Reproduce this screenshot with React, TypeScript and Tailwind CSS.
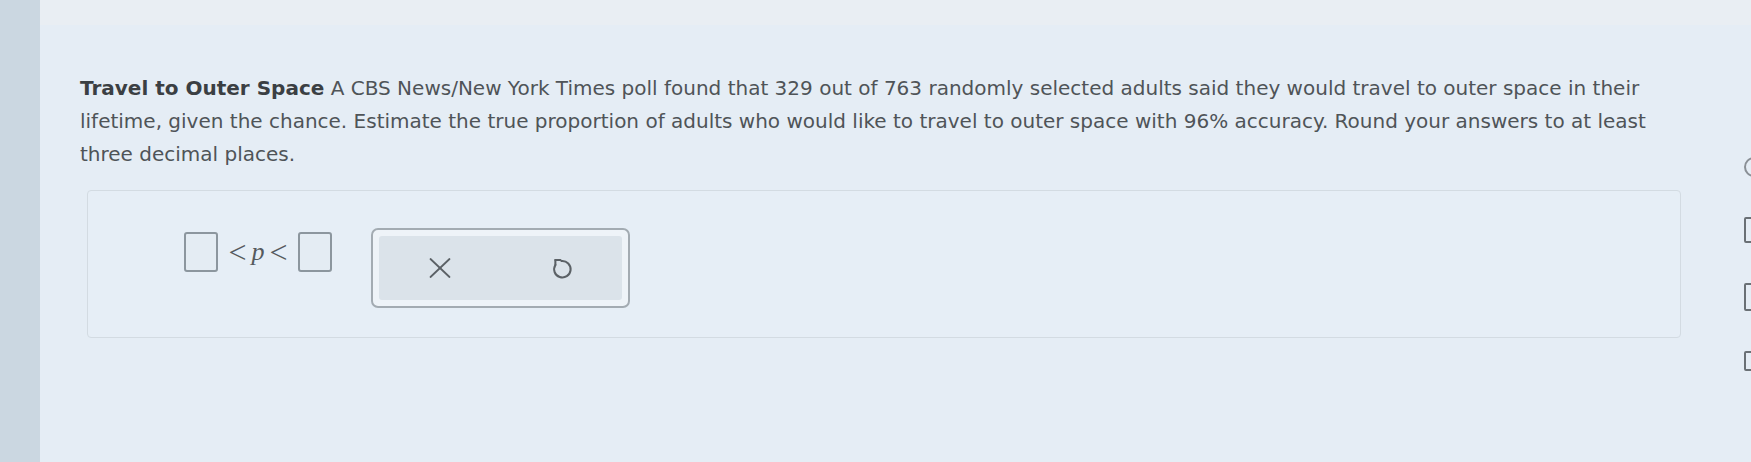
import React from "react";

// Small undo (circular arrow) glyph used in the answer toolbar
function UndoIcon() {
  return (
    <svg width="26" height="26" viewBox="0 0 24 24" fill="none" stroke="#5b6166" strokeWidth="1.9" strokeLinecap="round" strokeLinejoin="round">
      <path d="M12.5 5.6 A7.6 7.6 0 1 1 6.8 9.2" />
      <path d="M6.8 4.6 V9.2" />
      <path d="M6.8 4.6 H11.5" />
    </svg>
  );
}

function ClearIcon() {
  return (
    <svg width="24" height="24" viewBox="0 0 24 24" fill="none" stroke="#5b6166" strokeWidth="1.8" strokeLinecap="round">
      <path d="M2.5 3 L21.5 21" />
      <path d="M21.5 3 L2.5 21" />
    </svg>
  );
}

function AnswerBox() {
  return <div className="w-[34px] h-[40px] rounded-[3px] border-2 border-[#8c969e] bg-[#e4ecf3]" />;
}

export default function App() {
  const body = "text-[#4f5458]";
  return (
    <div className="w-full h-[462px] flex bg-[#e5edf5] overflow-hidden" style={{ fontFamily: '"DejaVu Sans", Verdana, sans-serif' }}>
      {/* left edge of the browser frame */}
      <div className="w-[40px] shrink-0 bg-[#cbd7e1]" />

      <div className="flex-1 flex flex-col min-w-0">
        <div className="h-[25px] shrink-0 bg-[#e9eef3]" />

        <div className="flex-1 flex min-h-0">
          <main className="flex-1 min-w-0 pl-[40px] pt-[47px]">
            <p className={`text-[20px] leading-[33px] whitespace-nowrap ${body}`}>
              <span className="font-bold text-[#3b3f43]">Travel to Outer Space</span> A CBS News/New York Times poll found that 329 out of 763 randomly selected adults said they would travel to outer space in their
              <br />
              lifetime, given the chance. Estimate the true proportion of adults who would like to travel to outer space with 96% accuracy. Round your answers to at least
              <br />
              three decimal places.
            </p>

            <section className="mt-[19px] ml-[7px] w-[1594px] h-[148px] rounded-[4px] border border-[#d3dbe2] bg-[#e6eef6] pl-[96px] pt-[37px]">
              <div className="flex items-start">
                <div className="flex items-center mt-[4px]">
                  <AnswerBox />
                  <span
                    className="flex items-center w-[80px] justify-center gap-[5px] text-[#555a5e]"
                    style={{ fontFamily: '"Liberation Serif", "Times New Roman", serif' }}
                  >
                    <span className="text-[32px] leading-none">&lt;</span>
                    <i className="text-[26px] leading-none">p</i>
                    <span className="text-[32px] leading-none">&lt;</span>
                  </span>
                  <AnswerBox />
                </div>

                <div className="ml-[39px] w-[259px] h-[80px] rounded-[7px] border-2 border-[#a3abb2] bg-[#eef3f8] p-[6px]">
                  <div className="w-full h-full rounded-[3px] bg-[#dbe3ea] flex">
                    <button className="flex-1 flex items-center justify-center">
                      <ClearIcon />
                    </button>
                    <button className="flex-1 flex items-center justify-center">
                      <UndoIcon />
                    </button>
                  </div>
                </div>
              </div>
            </section>
          </main>

          {/* right tool rail, mostly off-screen */}
          <aside className="w-[7px] shrink-0 overflow-hidden">
            <div className="w-[24px] flex flex-col items-start pt-[132px] gap-[40px]">
              <div className="w-[20px] h-[20px] rounded-full border-2 border-[#8a9096]" />
              <div className="w-[20px] h-[26px] rounded-[2px] border-2 border-[#6a7075]" />
              <div className="w-[20px] h-[28px] rounded-[2px] border-2 border-[#6a7075]" />
              <div className="w-[22px] h-[20px] rounded-[2px] border-2 border-[#6a7075]" />
            </div>
          </aside>
        </div>
      </div>
    </div>
  );
}
